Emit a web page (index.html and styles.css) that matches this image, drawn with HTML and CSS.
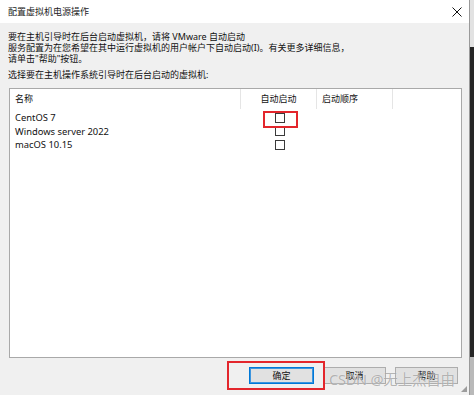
FILE: index.html
```html
<!DOCTYPE html>
<html lang="zh-CN">
<head>
<meta charset="utf-8">
<title>配置虚拟机电源操作</title>
<link rel="stylesheet" href="styles.css">
</head>
<body>
<div class="screen">
  <div class="dialog">
    <div class="titlebar">
      <span class="title">配置虚拟机电源操作</span>
      <svg class="close" width="10" height="10" viewBox="0 0 10 10"><path d="M0.5 0.5 L9.5 9.5 M9.5 0.5 L0.5 9.5" stroke="#111" stroke-width="1" fill="none"/></svg>
    </div>
    <div class="body">
      <p class="intro">要在主机引导时在后台启动虚拟机，请将 VMware 自动启动<br>服务配置为在您希望在其中运行虚拟机的用户帐户下自动启动(I)。有关更多详细信息，<br>请单击"帮助"按钮。</p>
      <p class="prompt">选择要在主机操作系统引导时在后台启动的虚拟机:</p>
      <div class="list">
        <div class="list-head">
          <div class="hcol c-name">名称</div>
          <div class="hcol c-auto">自动启动</div>
          <div class="hcol c-order">启动顺序</div>
          <div class="hcol c-rest"></div>
        </div>
        <div class="row"><div class="cell c-name">CentOS 7</div><div class="cell c-auto"><span class="check"></span></div></div>
        <div class="row"><div class="cell c-name">Windows server 2022</div><div class="cell c-auto"><span class="check"></span></div></div>
        <div class="row"><div class="cell c-name">macOS 10.15</div><div class="cell c-auto"><span class="check"></span></div></div>
        <div class="mark mark-check"></div>
      </div>
      <div class="buttons">
        <button class="btn btn-default">确定</button>
        <button class="btn">取消</button>
        <button class="btn">帮助</button>
      </div>
    </div>
    <div class="mark mark-ok"></div>
    <div class="watermark">CSDN @无上杰自由</div>
    <div class="grip"></div>
  </div>
  <div class="edge">
    <div class="edge-top"></div>
    <div class="edge-dark"></div>
    <div class="edge-bottom"></div>
  </div>
</div>
</body>
</html>
```

FILE: styles.css
```css
html, body {
  margin: 0;
  padding: 0;
}
body {
  width: 474px;
  height: 395px;
  overflow: hidden;
  font-family: "Noto Sans", "Noto Sans CJK SC", sans-serif;
  font-size: 9px;
  color: #111;
  background: #f0f0f0;
}
.screen {
  display: flex;
  width: 474px;
  height: 395px;
}
.dialog {
  position: relative;
  width: 469px;
  height: 395px;
  border-right: 1px solid #9a9a9a;
  display: flex;
  flex-direction: column;
  background: #f0f0f0;
}
.titlebar {
  height: 23px;
  background: #fff;
  display: flex;
  align-items: center;
  justify-content: space-between;
  padding: 0 7px 0 8px;
  flex: none;
}
.title {
  font-family: "Noto Sans CJK SC", sans-serif;
  font-size: 9px;
  line-height: 23px;
  color: #222;
}
.close {
  display: block;
  margin-top: 0;
}
.body {
  flex: 1;
  padding: 8px 8px 0 8px;
  display: flex;
  flex-direction: column;
}
.intro, .prompt {
  margin: 0;
  line-height: 11px;
  white-space: nowrap;
}
.prompt {
  margin-top: 5px;
}
.list {
  position: relative;
  margin: 8px 0 0 1px;
  width: 451px;
  height: 268px;
  border: 1px solid #a9a9a9;
  background: #fff;
}
.list-head {
  display: grid;
  grid-template-columns: 231px 76px 76px 1fr;
  height: 20px;
}
.hcol {
  border-right: 1px solid #e5e5e5;
  line-height: 20px;
  padding-left: 5px;
  font-family: "Noto Sans CJK SC", sans-serif;
}
.hcol.c-rest {
  border-right: none;
}
.hcol.c-auto {
  text-align: center;
  padding-left: 0;
}
.row {
  display: grid;
  grid-template-columns: 231px 76px;
  height: 13.5px;
  align-items: center;
}
.row:first-of-type {
  margin-top: 2px;
}
.list-head + .row {
  margin-top: 2px;
}
.cell.c-name {
  padding-left: 5px;
  font-size: 9.4px;
  line-height: 13.5px;
  white-space: nowrap;
}
.cell.c-auto {
  display: flex;
  justify-content: center;
  align-items: center;
}
.check {
  display: block;
  width: 8px;
  height: 8px;
  border: 1px solid #3a3a3a;
  background: #fff;
  margin-left: 1px;
}
.mark {
  position: absolute;
  border: 2px solid #e3262c;
  box-sizing: border-box;
}
.mark-check {
  left: 253px;
  top: 22px;
  width: 35px;
  height: 17px;
}
.mark-ok {
  left: 227px;
  top: 361px;
  width: 98px;
  height: 29px;
}
.buttons {
  display: flex;
  justify-content: flex-end;
  gap: 9px;
  margin-top: 9px;
  padding-right: 3px;
}
.btn {
  width: 63px;
  height: 17px;
  padding: 0;
  margin: 0;
  background: #e1e1e1;
  border: 1px solid #adadad;
  font-family: "Noto Sans CJK SC", sans-serif;
  font-size: 9px;
  line-height: 15px;
  color: #111;
}
.btn-default {
  border: 1px solid #0078d7;
  box-shadow: inset 0 0 0 1px #3d95de;
  width: 65px;
}
.watermark {
  position: absolute;
  left: 329px;
  top: 369px;
  font-family: "Noto Sans", "Noto Sans CJK SC", sans-serif;
  font-size: 14.5px;
  line-height: 20px;
  color: rgba(120, 120, 120, 0.55);
  white-space: nowrap;
  text-shadow: 0 0 1px rgba(255, 255, 255, 0.8);
  letter-spacing: -0.2px;
}
.grip {
  position: absolute;
  right: 2px;
  bottom: 3px;
  width: 6px;
  height: 6px;
  background: radial-gradient(circle, #9a9a9a 0.7px, transparent 1px) 0 0 / 2px 2px;
  clip-path: polygon(100% 0, 100% 100%, 0 100%);
}
.edge {
  width: 4px;
  display: flex;
  flex-direction: column;
}
.edge-top {
  height: 47px;
  background: #e2e2e2;
}
.edge-dark {
  flex: 1;
  background: #262626;
}
.edge-bottom {
  height: 38px;
  background: #b9b9b9;
}
```
